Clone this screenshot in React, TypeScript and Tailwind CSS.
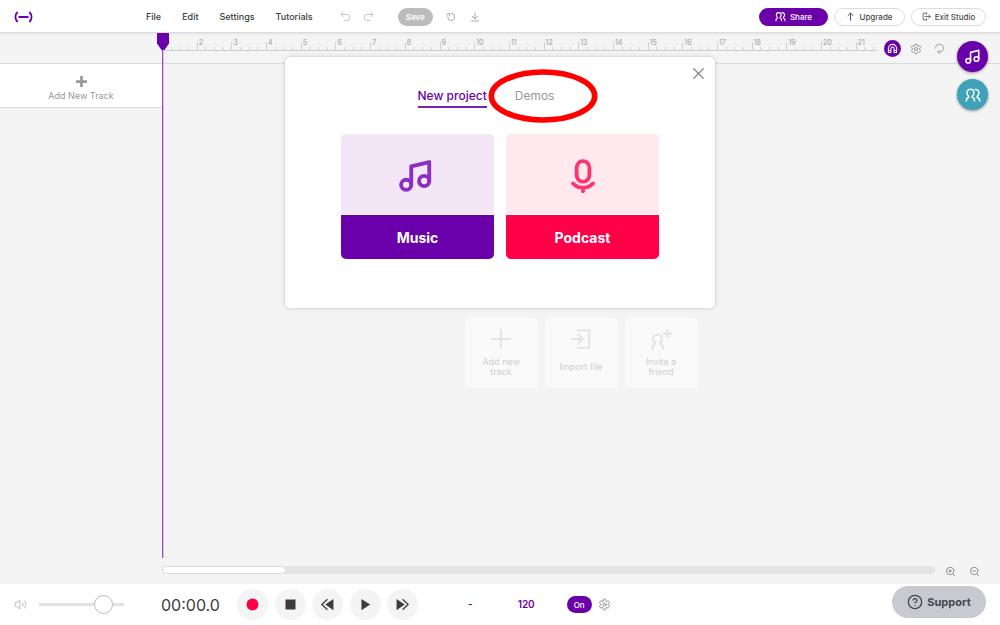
import React from "react";
import { Settings, X, ZoomIn, ZoomOut, CircleQuestionMark, Volume2 } from "lucide-react";

type IconProps = { className?: string; strokeWidth?: number; children?: React.ReactNode };

function Icon({ className, strokeWidth = 2, children }: IconProps) {
  return (
    <svg
      viewBox="0 0 24 24"
      fill="none"
      stroke="currentColor"
      strokeWidth={strokeWidth}
      strokeLinecap="round"
      strokeLinejoin="round"
      className={className}
      aria-hidden="true"
    >
      {children}
    </svg>
  );
}

const PeopleIcon = (p: IconProps) => (
  <Icon {...p}>
    <path d="M2 21c0-3 1.200-4.800 3.500-5.600V14C3.800 12.700 3 11 3 8.700a5.200 5.200 0 0 1 10.400 0c0 2.300-.8 4-2.500 5.300v1.400c2.300.8 3.500 2.600 3.500 5.600" />
    <path d="M15 3.600c3.400-.4 5.900 2 5.900 5.100 0 2.300-1 4-2.700 5.300v1.400c2.300.8 3.800 2.600 3.800 5.600" />
  </Icon>
);

const MusicIcon = (p: IconProps) => (
  <Icon {...p}>
    <circle cx="5.200" cy="18.800" r="3.700" />
    <circle cx="18.300" cy="16" r="3.700" />
    <path d="M8.900 18.800V5.400L22 2.200V16" />
  </Icon>
);

const MicIcon = (p: IconProps) => (
  <Icon {...p}>
    <rect x="7.500" y="1.500" width="9" height="14.500" rx="4.500" />
    <path d="M5 17.300c3.800 4 10.200 4 14 0M12 20.200V22.800" />
  </Icon>
);

const MagnetIcon = (p: IconProps) => (
  <Icon {...p}>
    <path d="M3 20.500V12a9 9 0 0 1 18 0v8.500h-5.500V12a3.500 3.500 0 0 0-7 0v8.500zM3 16.500h5.500M15.500 16.500H21" />
  </Icon>
);

const UndoIcon = (p: IconProps) => (
  <Icon {...p}>
    <path d="M7.500 2.500 2.500 7.500l5 5M2.500 7.500H15a6.500 6.500 0 0 1 0 13H9" />
  </Icon>
);

const RedoIcon = (p: IconProps) => (
  <Icon {...p}>
    <path d="m16.500 2.500 5 5-5 5M21.500 7.500H9a6.500 6.500 0 0 0 0 13h6" />
  </Icon>
);

const ResetIcon = (p: IconProps) => (
  <Icon {...p}>
    <path d="M3.500 11a8.500 8.500 0 1 1 8.500 8.700H8.500M12 16l-3.700 3.700L12 23.300" />
  </Icon>
);

const HistoryIcon = (p: IconProps) => (
  <Icon {...p}>
    <path d="M13 3.500a8.500 8.500 0 1 1-9 9M2.500 4h6v6M3 9v.1M13 3.500h-.5" />
  </Icon>
);

const DownloadIcon = (p: IconProps) => (
  <Icon {...p}>
    <path d="M12 2v14M5.500 10.500 12 16.500l6.500-6M3 21.500h18" />
  </Icon>
);

const ArrowUpIcon = (p: IconProps) => (
  <Icon {...p}>
    <path d="M12 22V3M5.500 9.500 12 3l6.500 6.500" />
  </Icon>
);

const ExitIcon = (p: IconProps) => (
  <Icon {...p}>
    <path d="M12 3H3v18h9M8 12h14M17.500 7.500 22 12l-4.500 4.500M12 3v3M12 18v3" />
  </Icon>
);

const ImportIcon = (p: IconProps) => (
  <Icon {...p}>
    <path d="M8 1.500h14v21H8M1.500 12h12M8.500 6.500 14 12l-5.500 5.500" />
  </Icon>
);

const PlusIcon = (p: IconProps) => (
  <Icon {...p}>
    <path d="M12 1.500v21M1.500 12h21" />
  </Icon>
);

const InviteIcon = (p: IconProps) => (
  <Icon {...p}>
    <path d="M1.500 22.500c0-2.800 1-4.700 3-5.500v-1.300C3 14.600 2.300 13.300 2.300 11.800a5.200 5.200 0 0 1 10.400 0c0 1.500-.7 2.800-2.200 3.900V17c2 .8 3 2.700 3 5.500M18.700 1v8.400M14.500 5.200h8.400" />
  </Icon>
);

const menus = ["File", "Edit", "Settings", "Tutorials"];
const QUARTERS = 83;

function Header() {
  return (
    <header className="flex h-[33px] items-center border-b border-[#dcdcdc] bg-white px-3.5 pt-px text-[9px] font-medium text-[#3c3c3c] shadow-[0_1px_2px_rgba(0,0,0,0.08)]">
      <a href="#home" aria-label="Home" className="w-[132px] text-[#6a00aa]">
        <svg viewBox="0 0 19 12" fill="none" stroke="currentColor" strokeWidth="1.800" className="h-3 w-[19px]" aria-hidden="true">
          <path d="M3.600 1C.7 3.800.7 8.200 3.600 11M15.400 1c2.900 2.800 2.900 7.200 0 10M4.500 6h10" />
        </svg>
      </a>
      <nav className="flex gap-[21px]">
        {menus.map((m) => (
          <button key={m} type="button">{m}</button>
        ))}
      </nav>
      <div className="ml-[27px] flex items-center text-[#999]">
        <button type="button" aria-label="Undo" className="text-[#c0c0c0]"><UndoIcon className="size-[11px]" /></button>
        <button type="button" aria-label="Redo" className="ml-3 text-[#c0c0c0]"><RedoIcon className="size-[11px]" /></button>
        <button type="button" className="ml-6 h-[18px] w-[35px] rounded-full bg-[#bcbcbc] text-[8px] font-semibold text-white">Save</button>
        <button type="button" aria-label="History" className="ml-[13px]"><HistoryIcon className="size-[10px]" /></button>
        <button type="button" aria-label="Download" className="ml-3.5"><DownloadIcon className="size-[10px]" /></button>
      </div>
      <div className="ml-auto flex gap-1.5 text-[8px] text-[#4a4a4a]">
        <button type="button" className="flex h-[18px] w-[69px] items-center justify-center gap-1 rounded-full bg-[#6a00aa] font-medium text-white">
          <PeopleIcon className="size-[11px]" strokeWidth={2.500} />
          Share
        </button>
        <button type="button" className="flex h-[18px] w-[71px] items-center justify-center gap-1 rounded-full border border-[#dcdcdc]">
          <ArrowUpIcon className="size-[9px]" strokeWidth={2.500} />
          Upgrade
        </button>
        <button type="button" className="flex h-[18px] w-[75px] items-center justify-center gap-1 rounded-full border border-[#dcdcdc]">
          <ExitIcon className="size-[9px]" strokeWidth={2} />
          Exit Studio
        </button>
      </div>
    </header>
  );
}

function Ruler() {
  return (
    <div className="flex h-[18px] flex-1 items-end border-b border-[#cfcfcf] text-[7px] leading-[8px] text-[#999]">
      {Array.from({ length: QUARTERS }, (_, i) => {
        const bar = i / 4 + 1;
        const whole = i % 4 === 0;
        return (
          <div
            key={i}
            className={whole ? "h-2 basis-0 border-l border-[#cfcfcf]" : "h-[3px] basis-0 border-l border-[#cfcfcf]"}
            style={{ flexGrow: i === QUARTERS - 1 ? 0.3 : 1, minWidth: 0 }}
          >
            {whole && i > 0 && <div className="-mt-[3px] w-0 whitespace-nowrap pl-px">{bar}</div>}
          </div>
        );
      })}
    </div>
  );
}

function Timeline() {
  return (
    <div className="relative flex min-w-0 flex-1 flex-col">
      <div className="flex h-[31px] items-start border-b border-[#dadada]">
        <Ruler />
        <div className="flex w-[123px] items-center pl-[7px] pt-[7px] text-[#999]">
          <button type="button" aria-label="Snap to grid" className="grid size-[17px] place-items-center rounded-full bg-[#6a00aa] text-white">
            <MagnetIcon className="size-[11px]" strokeWidth={2.200} />
          </button>
          <button type="button" aria-label="Timeline settings" className="ml-[9px]"><Settings className="size-3" strokeWidth={2} /></button>
          <button type="button" aria-label="Loop" className="ml-3"><ResetIcon className="size-[11px]" /></button>
        </div>
      </div>

      <div className="flex flex-1 justify-center pt-[254px]">
        <div className="flex h-[70px] gap-[7px] text-center text-[9px] leading-[10px] text-[#cfcfcf]">
          {[
            { label: "Add new track", icon: <PlusIcon className="size-5" strokeWidth={2.500} /> },
            { label: "Import file", icon: <ImportIcon className="size-5" strokeWidth={2.500} /> },
            { label: "Invite a friend", icon: <InviteIcon className="size-[21px]" strokeWidth={2.500} /> },
          ].map((c) => (
            <button key={c.label} type="button" className="flex w-[73px] flex-col items-center rounded bg-[#fafafa] pt-[11px]">
              <span className="h-[21px] text-[#e4e4e4]">{c.icon}</span>
              <span className="flex flex-1 items-center px-3 pb-1">{c.label}</span>
            </button>
          ))}
        </div>
      </div>

      <div className="flex h-[27px] items-center pb-px pr-5 text-[#888]">
        <div className="h-2 flex-1 rounded-full bg-[#e4e4e4]">
          <div className="h-2 w-[16%] rounded-full border border-[#dadada] bg-white" />
        </div>
        <button type="button" aria-label="Zoom in" className="ml-2.5 mt-0.5"><ZoomIn className="size-[11px]" strokeWidth={2} /></button>
        <button type="button" aria-label="Zoom out" className="ml-[13px] mt-0.5"><ZoomOut className="size-[11px]" strokeWidth={2} /></button>
      </div>

      <div className="absolute -left-[5px] bottom-[26px] top-0 flex w-3 flex-col">
        <svg viewBox="0 0 12 17" className="h-[17px] w-3 fill-[#6a00aa]" aria-hidden="true">
          <path d="M0 0h12v10.500L7.500 17h-3L0 10.500z" />
        </svg>
        <div className="ml-[5px] w-0.5 flex-1 border-l border-[#9a4cc8] bg-[#dcc0ec]" />
      </div>
    </div>
  );
}

function Transport() {
  return (
    <footer className="flex h-[41px] items-center bg-white pl-3.5 text-[#3c3c3c]">
      <Volume2 className="size-[13px] text-[#c8c8c8]" strokeWidth={2} aria-hidden="true" />
      <input
        type="range"
        aria-label="Master volume"
        defaultValue={83}
        className="ml-3 h-5 w-[85px] appearance-none bg-transparent [&::-webkit-slider-runnable-track]:h-[3px] [&::-webkit-slider-runnable-track]:bg-[#e2e2e2] [&::-webkit-slider-thumb]:-mt-2 [&::-webkit-slider-thumb]:size-[19px] [&::-webkit-slider-thumb]:appearance-none [&::-webkit-slider-thumb]:rounded-full [&::-webkit-slider-thumb]:border [&::-webkit-slider-thumb]:border-[#bcbcbc] [&::-webkit-slider-thumb]:bg-white"
      />
      <div className="ml-[37px] w-[76px] text-[16px]">00:00.0</div>
      <div className="flex w-[181px] justify-between">
        {[
          { label: "Record", art: <circle cx="12" cy="12" r="9.500" fill="#ff0048" /> },
          { label: "Stop", art: <path d="M4 4h16v16H4z" fill="currentColor" /> },
          {
            label: "Rewind",
            art: (
              <>
                <path d="M21.500 3v18L8.500 12z" fill="currentColor" />
                <path d="M12 3.500 3 12l9 8.500" fill="none" stroke="currentColor" strokeWidth="2" />
              </>
            ),
          },
          { label: "Play", art: <path d="M5.500 3v18l14-9z" fill="currentColor" /> },
          {
            label: "Fast forward",
            art: (
              <>
                <path d="M2.500 3v18l13-9z" fill="currentColor" />
                <path d="m12 3.500 9 8.500-9 8.500" fill="none" stroke="currentColor" strokeWidth="2" />
              </>
            ),
          },
        ].map((b) => (
          <button key={b.label} type="button" aria-label={b.label} className="grid size-[31px] place-items-center rounded-full bg-[#f4f4f4]">
            <svg viewBox="0 0 24 24" className="size-[15px]" aria-hidden="true">{b.art}</svg>
          </button>
        ))}
      </div>
      <div className="ml-[50px] flex items-center text-[10px] font-semibold text-[#6a00aa]">
        <button type="button" aria-label="Key">-</button>
        <button type="button" aria-label="Tempo" className="ml-[45px]">120</button>
        <button type="button" className="ml-8 h-[17px] w-[25px] rounded-full bg-[#6a00aa] text-[8px] font-medium text-white">On</button>
      </div>
      <button type="button" aria-label="Metronome settings" className="ml-1.5 text-[#888]"><Settings className="size-[13px]" strokeWidth={1.800} /></button>
    </footer>
  );
}

function ProjectDialog() {
  return (
    <section
      role="dialog"
      aria-label="New project"
      className="absolute inset-x-0 top-[57px] mx-auto flex h-[251px] w-[430px] flex-col items-center rounded-[5px] bg-white shadow-[0_0_4px_rgba(0,0,0,0.2)]"
    >
      <button type="button" aria-label="Close" className="absolute right-[7px] top-[7px] text-[#888]">
        <X className="size-[19px]" strokeWidth={1.500} />
      </button>
      <div className="mt-7 flex w-[165px] items-start gap-7 text-[12px] leading-5">
        <button type="button" className="whitespace-nowrap border-b-2 border-[#7a1fb8] pt-px font-medium text-[#6a00aa]">New project</button>
        <div className="relative pt-px">
          <button type="button" className="text-[#999]">Demos</button>
          <svg viewBox="0 0 110 54" className="absolute left-1/2 top-1/2 h-[54px] w-[110px] max-w-none -translate-x-[47px] -translate-y-[27px]" aria-hidden="true">
            <ellipse cx="55" cy="27" rx="51.700" ry="24" fill="none" stroke="#ff0000" strokeWidth="5.600" />
          </svg>
        </div>
      </div>
      <div className="mt-[26px] flex gap-3 text-[14px] font-bold text-white">
        <button type="button" className="w-[153px] overflow-hidden rounded-[5px]">
          <span className="grid h-20 place-items-center bg-[#f2e6f7] pr-1 pt-[3px] text-[#8a2fc0]">
            <MusicIcon className="size-[33px]" strokeWidth={2.800} />
          </span>
          <span className="mt-px flex h-11 items-center justify-center bg-[#6a00aa] pt-px">Music</span>
        </button>
        <button type="button" className="w-[153px] overflow-hidden rounded-[5px]">
          <span className="grid h-20 place-items-center bg-[#ffe9ee] pt-[3px] text-[#ff336d]">
            <MicIcon className="size-[34px]" strokeWidth={2.700} />
          </span>
          <span className="mt-px flex h-11 items-center justify-center bg-[#ff0048] pt-px">Podcast</span>
        </button>
      </div>
    </section>
  );
}

export default function App() {
  return (
    <div className="relative flex min-h-screen flex-col bg-[#f4f4f4] font-['Inter','Liberation_Sans',sans-serif]">
      <Header />
      <main className="flex flex-1">
        <aside className="w-[162px] pt-[30px]">
          <button type="button" className="flex h-[45px] w-full flex-col items-center border-y border-[#dadada] bg-white pt-3 text-[9px] leading-3 text-[#999]">
            <PlusIcon className="mb-[3px] size-[11px]" strokeWidth={6} />
            Add New Track
          </button>
        </aside>
        <Timeline />
      </main>
      <Transport />

      <div className="absolute right-3 top-[41px] flex flex-col gap-[7px] text-white">
        <button type="button" aria-label="Loops" className="grid size-[31px] place-items-center rounded-full bg-[#6a00aa] shadow-[0_1px_3px_rgba(0,0,0,0.4)]">
          <MusicIcon className="size-[15px]" strokeWidth={2.500} />
        </button>
        <button type="button" aria-label="Collaborators" className="grid size-[31px] place-items-center rounded-full bg-[#3fa2b8] shadow-[0_1px_3px_rgba(0,0,0,0.4)]">
          <PeopleIcon className="size-4" strokeWidth={2.200} />
        </button>
      </div>
      <ProjectDialog />
      <button type="button" className="absolute bottom-[7px] right-3.5 flex h-8 w-[94px] items-center justify-center gap-1 rounded-full bg-[#c8c9d1] text-[11px] font-bold text-[#46474c]">
        <CircleQuestionMark className="size-4" strokeWidth={2} />
        Support
      </button>
    </div>
  );
}
